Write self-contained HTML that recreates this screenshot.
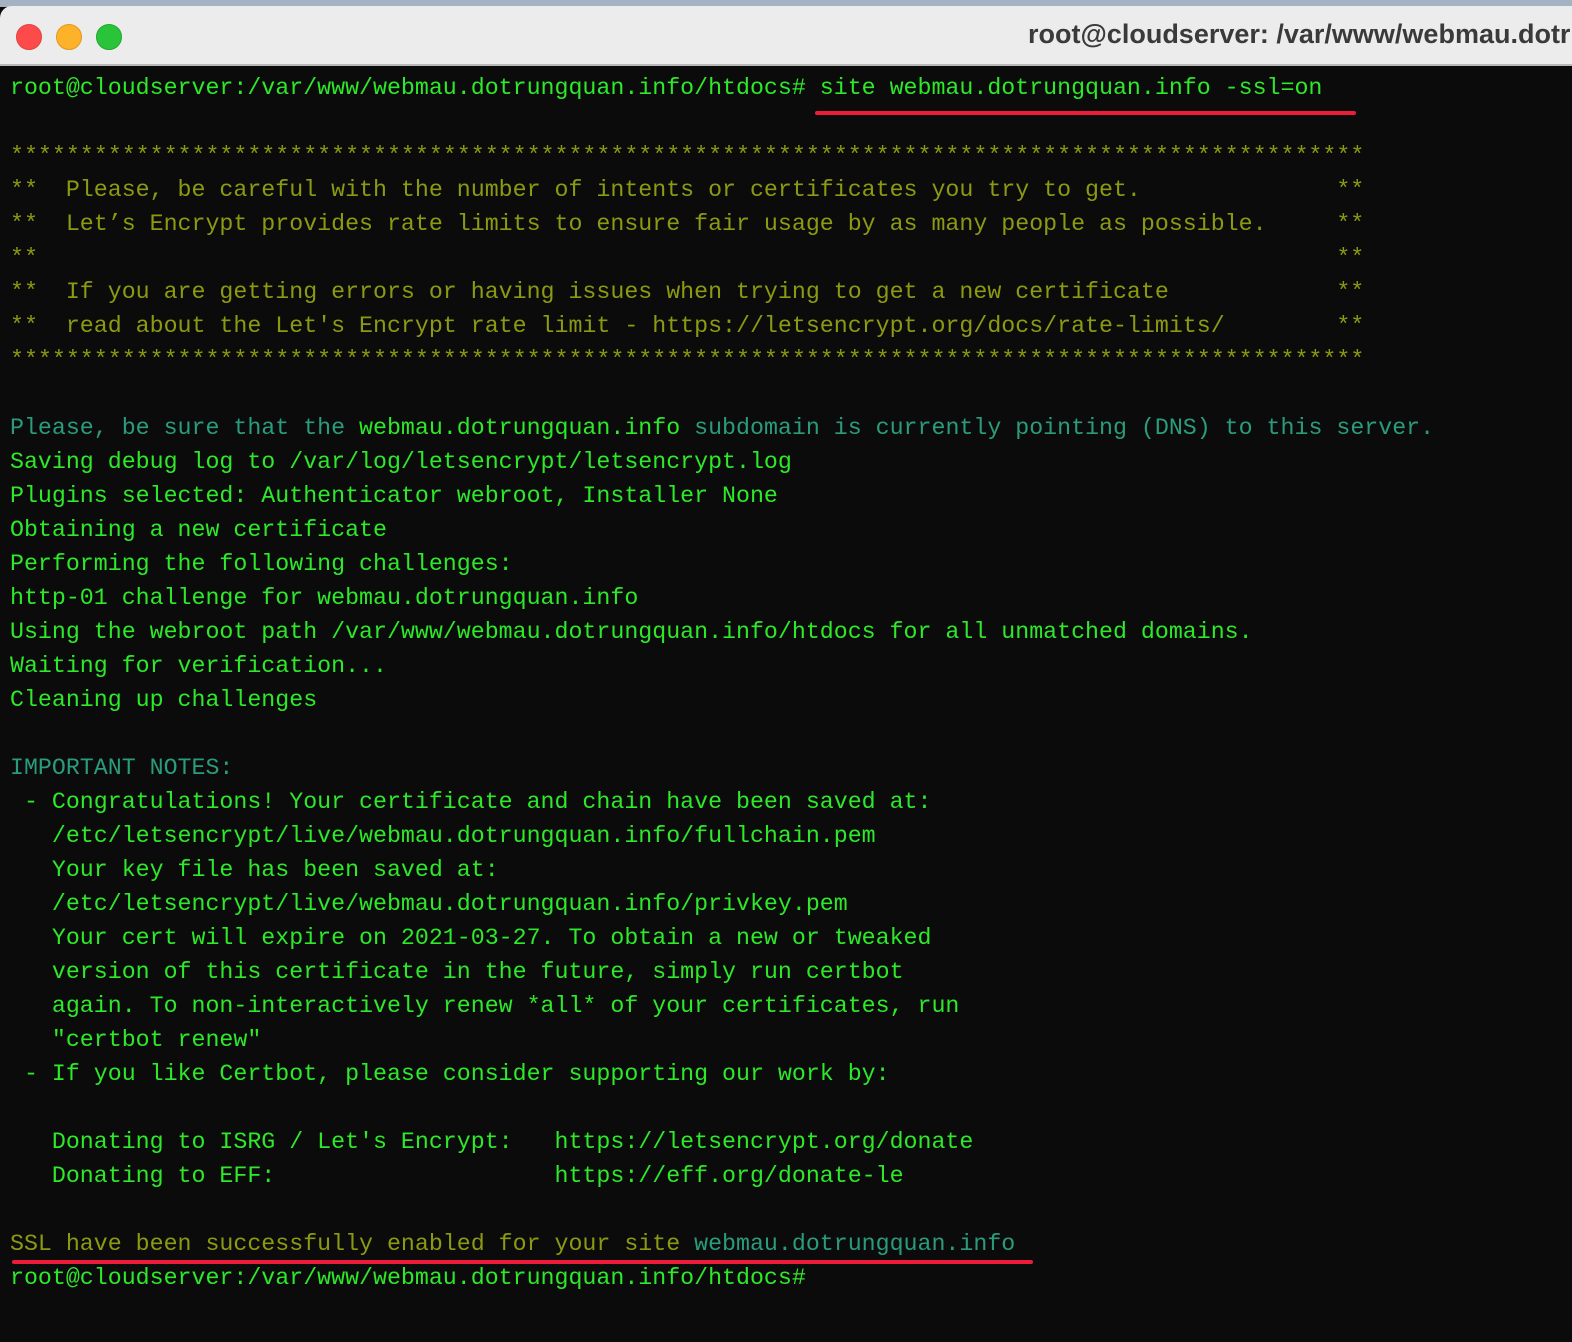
<!DOCTYPE html>
<html><head><meta charset="utf-8"><style>
html,body{margin:0;padding:0;}
body{width:1572px;height:1342px;background:#0b0b0b;position:relative;overflow:hidden;}
.top{position:absolute;left:0;top:0;width:1572px;height:7px;background:#a3b3c3;}
.bar{position:absolute;left:0;top:6px;width:1572px;height:58px;background:#ececec;border-radius:12px 0 0 0;border-bottom:2px solid #b8b8b8;overflow:hidden;}
.dot{position:absolute;top:18px;width:24px;height:24px;border-radius:50%;}
.title{position:absolute;left:1028px;top:13px;font:bold 27px "Liberation Sans",sans-serif;color:#3a3a3a;white-space:nowrap;}
.term{position:absolute;left:10px;top:71px;font-family:"Liberation Mono",monospace;font-size:23.27px;line-height:34px;color:#2ee82a;}
.l{height:34px;position:relative;white-space:pre;}
.o{color:#8c9a12;}
.t{color:#2a9c7c;}
.r{position:absolute;left:95ch;color:#8c9a12;}
.u{position:absolute;height:4px;background:#ee1c3a;border-radius:2px;}
</style></head><body>
<div class="top"></div>
<div class="bar">
<div class="dot" style="left:16px;background:#fd4a4a;border:1px solid #e0443e;"></div>
<div class="dot" style="left:56px;background:#fdb22a;border:1px solid #de9a1e;"></div>
<div class="dot" style="left:96px;background:#2ac43a;border:1px solid #1ea82a;"></div>
<div class="title">root@cloudserver: /var/www/webmau.dotrungquan.info</div>
</div>
<div class="term"><div class="l">root@cloudserver:/var/www/webmau.dotrungquan.info/htdocs# site webmau.dotrungquan.info -ssl=on</div><div class="l"> </div><div class="l o">*************************************************************************************************</div><div class="l o">**  Please, be careful with the number of intents or certificates you try to get.<span class="r">**</span></div><div class="l o">**  Let’s Encrypt provides rate limits to ensure fair usage by as many people as possible.<span class="r">**</span></div><div class="l o">**<span class="r">**</span></div><div class="l o">**  If you are getting errors or having issues when trying to get a new certificate<span class="r">**</span></div><div class="l o">**  read about the Let's Encrypt rate limit - https://letsencrypt.org/docs/rate-limits/<span class="r">**</span></div><div class="l o">*************************************************************************************************</div><div class="l"> </div><div class="l"><span class="t">Please, be sure that the </span>webmau.dotrungquan.info<span class="t"> subdomain is currently pointing (DNS) to this server.</span></div><div class="l">Saving debug log to /var/log/letsencrypt/letsencrypt.log</div><div class="l">Plugins selected: Authenticator webroot, Installer None</div><div class="l">Obtaining a new certificate</div><div class="l">Performing the following challenges:</div><div class="l">http-01 challenge for webmau.dotrungquan.info</div><div class="l">Using the webroot path /var/www/webmau.dotrungquan.info/htdocs for all unmatched domains.</div><div class="l">Waiting for verification...</div><div class="l">Cleaning up challenges</div><div class="l"> </div><div class="l t">IMPORTANT NOTES:</div><div class="l"> - Congratulations! Your certificate and chain have been saved at:</div><div class="l">   /etc/letsencrypt/live/webmau.dotrungquan.info/fullchain.pem</div><div class="l">   Your key file has been saved at:</div><div class="l">   /etc/letsencrypt/live/webmau.dotrungquan.info/privkey.pem</div><div class="l">   Your cert will expire on 2021-03-27. To obtain a new or tweaked</div><div class="l">   version of this certificate in the future, simply run certbot</div><div class="l">   again. To non-interactively renew *all* of your certificates, run</div><div class="l">   "certbot renew"</div><div class="l"> - If you like Certbot, please consider supporting our work by:</div><div class="l"> </div><div class="l">   Donating to ISRG / Let's Encrypt:   https://letsencrypt.org/donate</div><div class="l">   Donating to EFF:                    https://eff.org/donate-le</div><div class="l"> </div><div class="l"><span class="o">SSL have been successfully enabled for your site </span><span class="t">webmau.dotrungquan.info</span></div><div class="l">root@cloudserver:/var/www/webmau.dotrungquan.info/htdocs#</div></div>
<div class="u" style="left:815px;top:111px;width:541px;"></div>
<div class="u" style="left:12px;top:1260px;width:1021px;"></div>
</body></html>
